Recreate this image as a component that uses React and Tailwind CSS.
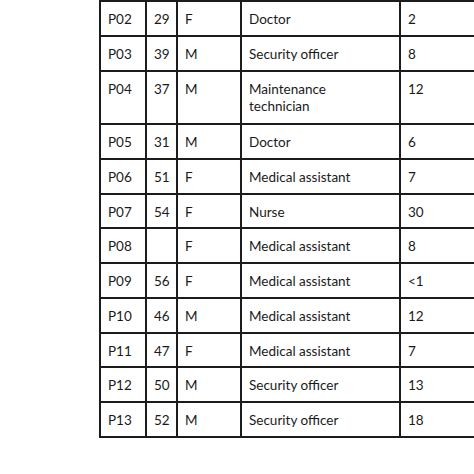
const rows = [
  { id: "P02", age: "29", sex: "F", job: ["Doctor"], years: "2", h: "h-[35px]" },
  { id: "P03", age: "39", sex: "M", job: ["Security officer"], years: "8", h: "h-[35px]" },
  { id: "P04", age: "37", sex: "M", job: ["Maintenance", "technician"], years: "12", h: "h-[53px]" },
  { id: "P05", age: "31", sex: "M", job: ["Doctor"], years: "6", h: "h-[35px]" },
  { id: "P06", age: "51", sex: "F", job: ["Medical assistant"], years: "7", h: "h-[35px]" },
  { id: "P07", age: "54", sex: "F", job: ["Nurse"], years: "30", h: "h-[34px]" },
  { id: "P08", age: "", sex: "F", job: ["Medical assistant"], years: "8", h: "h-[35px]" },
  { id: "P09", age: "56", sex: "F", job: ["Medical assistant"], years: "<1", h: "h-[35px]" },
  { id: "P10", age: "46", sex: "M", job: ["Medical assistant"], years: "12", h: "h-[35px]" },
  { id: "P11", age: "47", sex: "F", job: ["Medical assistant"], years: "7", h: "h-[34px]" },
  { id: "P12", age: "50", sex: "M", job: ["Security officer"], years: "13", h: "h-[35px]" },
  { id: "P13", age: "52", sex: "M", job: ["Security officer"], years: "18", h: "h-[35px]" },
];

function Cell({ w, children }) {
  return (
    <div className={`${w} shrink-0 border-r-2 border-[#1c1c1c] pl-[7px] pt-[9px] leading-[17px]`}>
      {children}
    </div>
  );
}

export default function App() {
  return (
    <div
      className="w-[474px] h-[474px] overflow-hidden bg-white text-[13.5px] text-[#1a1a1a]"
      style={{ fontFamily: "Lato, 'Open Sans', sans-serif" }}
    >
      <div className="ml-[99px] w-[520px] border-l-2 border-t-2 border-[#1c1c1c]">
        {rows.map((r) => (
          <div key={r.id} className={`${r.h} flex border-b-2 border-[#1c1c1c]`}>
            <Cell w="w-[46px]">{r.id}</Cell>
            <Cell w="w-[31px]">{r.age}</Cell>
            <Cell w="w-[64px]">{r.sex}</Cell>
            <Cell w="w-[159px]">
              {r.job.map((line) => (
                <div key={line}>{line}</div>
              ))}
            </Cell>
            <Cell w="w-[220px]">{r.years}</Cell>
          </div>
        ))}
      </div>
    </div>
  );
}
